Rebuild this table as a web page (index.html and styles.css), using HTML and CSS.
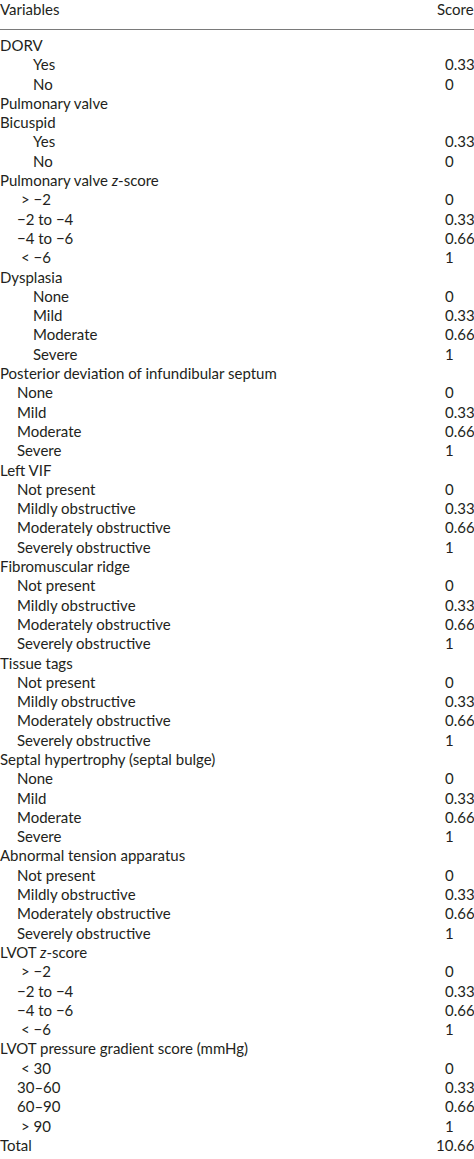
FILE: index.html
```html
<!DOCTYPE html>
<html>
<head>
<meta charset="utf-8">
<link rel="stylesheet" href="styles.css">
</head>
<body>
<div class="page">
  <div class="head">
    <span class="label">Variables</span>
    <span class="val score-h">Score</span>
  </div>
  <div class="rows">
    <div class="row"><span class="label">DORV</span><span class="val"></span></div>
    <div class="row"><span class="label i1">Yes</span><span class="val">0.33</span></div>
    <div class="row"><span class="label i1">No</span><span class="val">0</span></div>
    <div class="row"><span class="label">Pulmonary valve</span><span class="val"></span></div>
    <div class="row"><span class="label">Bicuspid</span><span class="val"></span></div>
    <div class="row"><span class="label i1">Yes</span><span class="val">0.33</span></div>
    <div class="row"><span class="label i1">No</span><span class="val">0</span></div>
    <div class="row"><span class="label">Pulmonary valve <i>z</i>-score</span><span class="val"></span></div>
    <div class="row"><span class="label i3">&gt; −2</span><span class="val">0</span></div>
    <div class="row"><span class="label i2">−2 to −4</span><span class="val">0.33</span></div>
    <div class="row"><span class="label i2">−4 to −6</span><span class="val">0.66</span></div>
    <div class="row"><span class="label i3">&lt; −6</span><span class="val">1</span></div>
    <div class="row"><span class="label">Dysplasia</span><span class="val"></span></div>
    <div class="row"><span class="label i1">None</span><span class="val">0</span></div>
    <div class="row"><span class="label i1">Mild</span><span class="val">0.33</span></div>
    <div class="row"><span class="label i1">Moderate</span><span class="val">0.66</span></div>
    <div class="row"><span class="label i1">Severe</span><span class="val">1</span></div>
    <div class="row"><span class="label">Posterior deviation of infundibular septum</span><span class="val"></span></div>
    <div class="row"><span class="label i2">None</span><span class="val">0</span></div>
    <div class="row"><span class="label i2">Mild</span><span class="val">0.33</span></div>
    <div class="row"><span class="label i2">Moderate</span><span class="val">0.66</span></div>
    <div class="row"><span class="label i2">Severe</span><span class="val">1</span></div>
    <div class="row"><span class="label">Left VIF</span><span class="val"></span></div>
    <div class="row"><span class="label i2">Not present</span><span class="val">0</span></div>
    <div class="row"><span class="label i2">Mildly obstructive</span><span class="val">0.33</span></div>
    <div class="row"><span class="label i2">Moderately obstructive</span><span class="val">0.66</span></div>
    <div class="row"><span class="label i2">Severely obstructive</span><span class="val">1</span></div>
    <div class="row"><span class="label">Fibromuscular ridge</span><span class="val"></span></div>
    <div class="row"><span class="label i2">Not present</span><span class="val">0</span></div>
    <div class="row"><span class="label i2">Mildly obstructive</span><span class="val">0.33</span></div>
    <div class="row"><span class="label i2">Moderately obstructive</span><span class="val">0.66</span></div>
    <div class="row"><span class="label i2">Severely obstructive</span><span class="val">1</span></div>
    <div class="row"><span class="label">Tissue tags</span><span class="val"></span></div>
    <div class="row"><span class="label i2">Not present</span><span class="val">0</span></div>
    <div class="row"><span class="label i2">Mildly obstructive</span><span class="val">0.33</span></div>
    <div class="row"><span class="label i2">Moderately obstructive</span><span class="val">0.66</span></div>
    <div class="row"><span class="label i2">Severely obstructive</span><span class="val">1</span></div>
    <div class="row"><span class="label">Septal hypertrophy (septal bulge)</span><span class="val"></span></div>
    <div class="row"><span class="label i2">None</span><span class="val">0</span></div>
    <div class="row"><span class="label i2">Mild</span><span class="val">0.33</span></div>
    <div class="row"><span class="label i2">Moderate</span><span class="val">0.66</span></div>
    <div class="row"><span class="label i2">Severe</span><span class="val">1</span></div>
    <div class="row"><span class="label">Abnormal tension apparatus</span><span class="val"></span></div>
    <div class="row"><span class="label i2">Not present</span><span class="val">0</span></div>
    <div class="row"><span class="label i2">Mildly obstructive</span><span class="val">0.33</span></div>
    <div class="row"><span class="label i2">Moderately obstructive</span><span class="val">0.66</span></div>
    <div class="row"><span class="label i2">Severely obstructive</span><span class="val">1</span></div>
    <div class="row"><span class="label">LVOT <i>z</i>-score</span><span class="val"></span></div>
    <div class="row"><span class="label i3">&gt; −2</span><span class="val">0</span></div>
    <div class="row"><span class="label i2">−2 to −4</span><span class="val">0.33</span></div>
    <div class="row"><span class="label i2">−4 to −6</span><span class="val">0.66</span></div>
    <div class="row"><span class="label i3">&lt; −6</span><span class="val">1</span></div>
    <div class="row"><span class="label">LVOT pressure gradient score (mmHg)</span><span class="val"></span></div>
    <div class="row"><span class="label i3">&lt; 30</span><span class="val">0</span></div>
    <div class="row"><span class="label i2">30–60</span><span class="val">0.33</span></div>
    <div class="row"><span class="label i2">60–90</span><span class="val">0.66</span></div>
    <div class="row"><span class="label i3">&gt; 90</span><span class="val">1</span></div>
    <div class="row"><span class="label">Total</span><span class="val total">10.66</span></div>
  </div>
</div>
</body>
</html>
```

FILE: styles.css
```css
html, body {
  margin: 0;
  padding: 0;
  background: #ffffff;
}
.page {
  width: 474px;
  height: 1159px;
  overflow: hidden;
  font-family: Lato, "Open Sans", sans-serif;
  font-size: 15px;
  color: #231f20;
}
.head {
  display: grid;
  grid-template-columns: 445px 1fr;
  height: 28px;
  padding-top: 1px;
  line-height: 16px;
  border-bottom: 1px solid #7a7a7a;
  box-sizing: content-box;
}
.head {
  height: 28px;
}
.rows {
  padding-top: 6px;
}
.row {
  display: grid;
  grid-template-columns: 445px 1fr;
  height: 19.3px;
  line-height: 19.3px;
  white-space: nowrap;
}
.label {
  display: block;
}
.val {
  display: block;
  white-space: nowrap;
}
.score-h {
  margin-left: -8px;
}
.total {
  margin-left: -9px;
}
.i1 { padding-left: 33px; }
.i2 { padding-left: 17px; }
.i3 { padding-left: 21px; }
i { font-style: italic; }
```
